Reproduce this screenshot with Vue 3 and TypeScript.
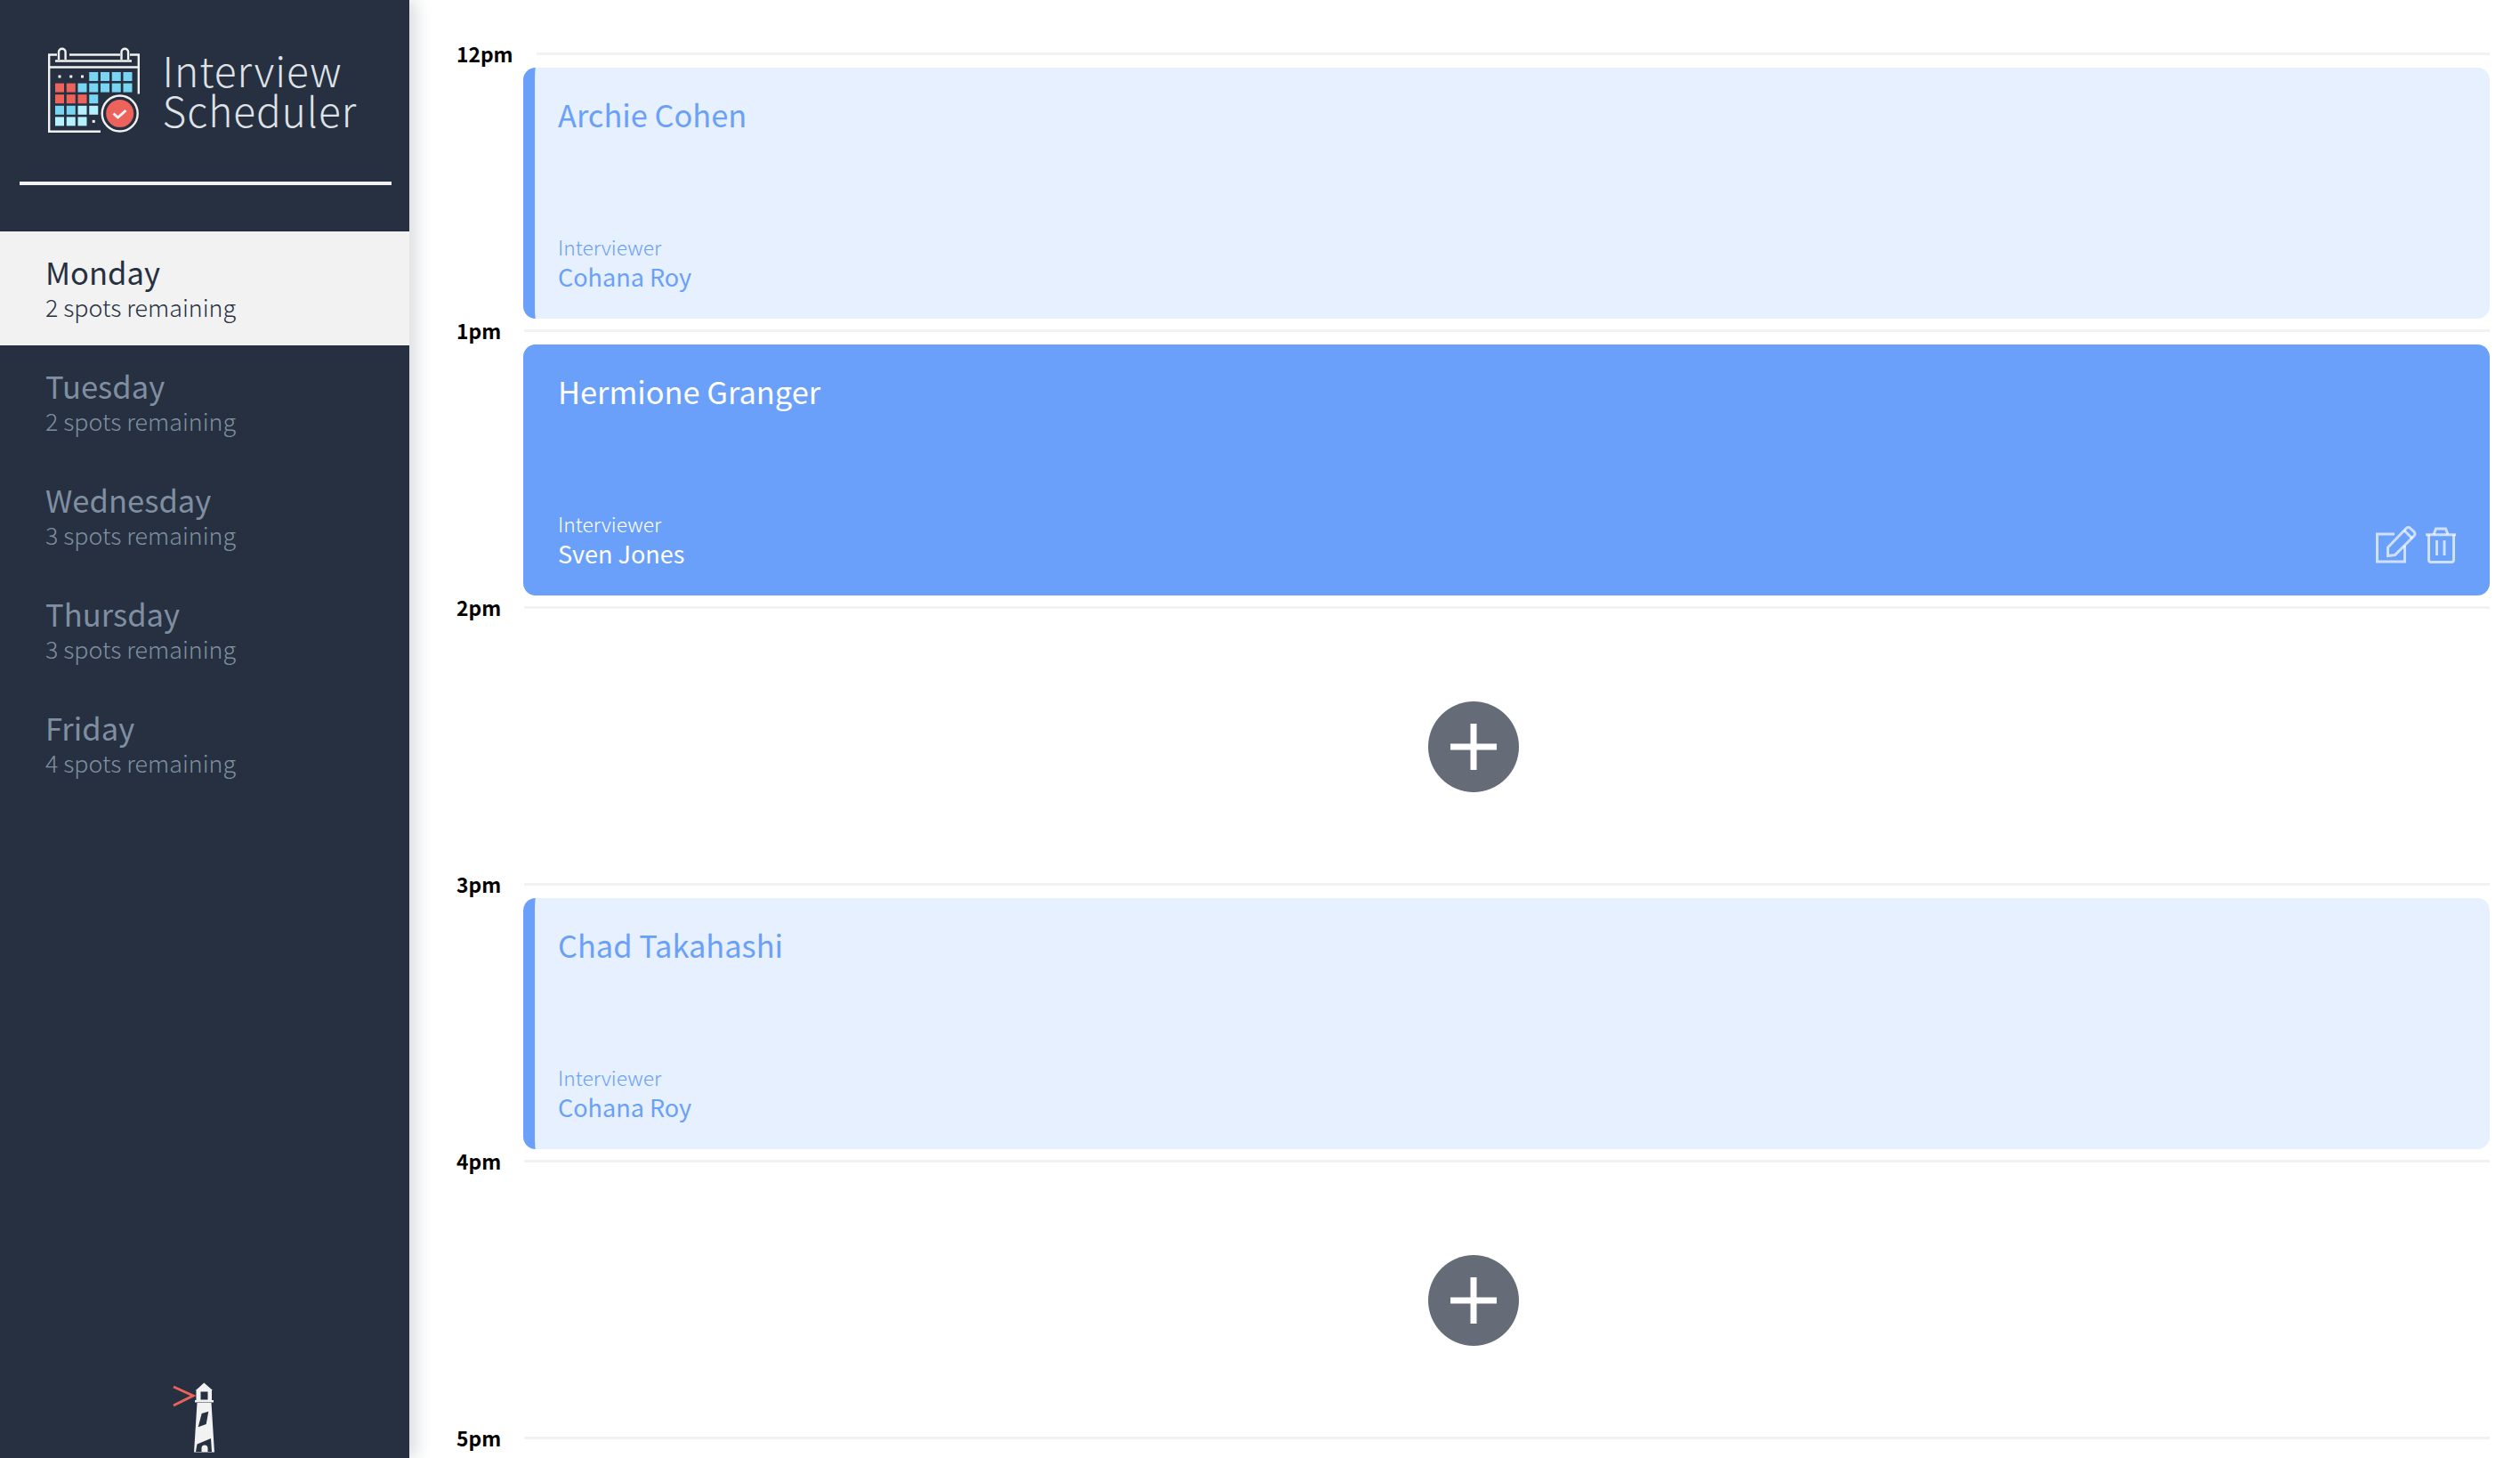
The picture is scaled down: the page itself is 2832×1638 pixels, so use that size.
<script setup lang="ts">
interface Day { name: string; spots: string; selected?: boolean }
interface Slot { time: string; student?: string; interviewer?: string; hover?: boolean }

const days: Day[] = [
  { name: 'Monday', spots: '2 spots remaining', selected: true },
  { name: 'Tuesday', spots: '2 spots remaining' },
  { name: 'Wednesday', spots: '3 spots remaining' },
  { name: 'Thursday', spots: '3 spots remaining' },
  { name: 'Friday', spots: '4 spots remaining' }
]
const slots: Slot[] = [
  { time: '12pm', student: 'Archie Cohen', interviewer: 'Cohana Roy' },
  { time: '1pm', student: 'Hermione Granger', interviewer: 'Sven Jones', hover: true },
  { time: '2pm' },
  { time: '3pm', student: 'Chad Takahashi', interviewer: 'Cohana Roy' },
  { time: '4pm' },
  { time: '5pm' }
]
const B = '#78d6f2', R = '#ee625c', L = '#b5f0fd', D = 'dot', N = ''
const rows = [
  [D, D, D, B, B, B, B],
  [R, R, B, B, B, B, B],
  [R, R, R, B, N, N, N],
  [B, B, L, L, N, N, N],
  [L, L, L, D, N, N, N]
]
const cells = rows.flatMap((r, y) => r.map((c, x) => ({ c, x: 62 + x * 12.75, y: 81 + y * 12.6 }))).filter(c => c.c)
</script>

<template>
  <div class="layout">
    <aside class="sidebar">
      <div class="brand">
        <svg class="logo" viewBox="52 50 108 102" width="108" height="102">
          <g fill="none" stroke="#f2f2f2" stroke-width="2.4">
            <path d="M64 61.5H55.2V147.8H113" />
            <path d="M78 61.5H135" />
            <path d="M146 61.5H155.8V105.5" />
            <path d="M62 68.5H148" />
            <path d="M55 75.5H156" />
            <path d="M66 67V58.5a3.8 3.8 0 0 1 7.6 0V67" />
            <path d="M136.5 67V58.5a3.8 3.8 0 0 1 7.6 0V67" />
            <circle cx="134.7" cy="127.5" r="20" />
          </g>
          <template v-for="(c, i) in cells" :key="i">
            <rect v-if="c.c === 'dot'" :x="c.x + 3.5" :y="c.y + 3.5" width="3" height="3" fill="#f2f2f2" />
            <rect v-else :x="c.x" :y="c.y" width="10" height="10" :fill="c.c" />
          </template>
          <circle cx="134.7" cy="127.5" r="15.5" fill="#ee625c" />
          <path d="M127.5 127.5l5 4.5 9-8" fill="none" stroke="#f2f2f2" stroke-width="3" />
        </svg>
        <div class="title">Interview<br />Scheduler</div>
      </div>
      <hr class="rule" />
      <nav class="days">
        <div v-for="d in days" :key="d.name" class="day" :class="{ selected: d.selected }">
          <div class="day-name">{{ d.name }}</div>
          <div class="day-spots">{{ d.spots }}</div>
        </div>
      </nav>
      <svg class="lighthouse" viewBox="190 1550 56 84" width="56" height="84">
        <path d="M195 1558l22 10-22 11" fill="none" stroke="#ee625c" stroke-width="3" />
        <path d="M229.3 1553.5L239 1562H220z" fill="#f2f2f2" />
        <path d="M220.5 1561.5h17.5v12h-17.5z M225.5 1563.5v9h8v-9z" fill="#f2f2f2" fill-rule="evenodd" />
        <path d="M219 1573h21v2.5h-21z" fill="#f2f2f2" />
        <path d="M221.5 1576H237.5L241 1631.5H218z" fill="#f2f2f2" />
        <path d="M226.7 1588L234.3 1585.7L231.7 1600L222.7 1603.3z" fill="#263040" />
        <path d="M221.5 1622.5L237 1616L238 1631H233.5V1627a3.5 3.5 0 0 0-7 0V1631H220z" fill="#263040" />
      </svg>
    </aside>

    <main class="schedule">
      <article v-for="s in slots" :key="s.time" class="slot">
        <header class="slot-head">
          <h4 class="time">{{ s.time }}</h4>
          <div class="line"></div>
        </header>
        <section v-if="s.student" class="card" :class="{ hover: s.hover }">
          <div class="student">{{ s.student }}</div>
          <div class="card-foot">
            <div>
              <div class="label">Interviewer</div>
              <div class="interviewer">{{ s.interviewer }}</div>
            </div>
            <svg v-if="s.hover" class="actions" viewBox="0 0 94 46" width="94" height="46" fill="none" stroke="#fff" stroke-opacity=".68" stroke-width="3">
              <path d="M23 11H3.5V42H34.5V24" />
              <path d="M15.5 35.5l8-1L45 13a3.2 3.2 0 0 0 0-4.5L40.7 4.5a3.2 3.2 0 0 0-4.5 0L15.5 26z" />
              <path d="M34 7l9 9" />
              <path d="M58 11.7H92" />
              <path d="M61.5 11.7V40a2.5 2.5 0 0 0 2.5 2.5H87a2.5 2.5 0 0 0 2.5-2.5V11.7" />
              <path d="M67 11.5L69.5 5H80.5L83 11.5" />
              <path d="M70.5 18V35" />
              <path d="M79 18V35" />
            </svg>
          </div>
        </section>
        <section v-else class="empty">
          <svg class="add" viewBox="0 0 102 102" width="102" height="102">
            <circle cx="51" cy="51" r="51" fill="#656c77" />
            <path d="M47.5 25h7v22.5H77v7H54.5V77h-7V54.5H25v-7h22.5z" fill="#fff" />
          </svg>
        </section>
      </article>
    </main>
  </div>
</template>

<style>
html, body { margin: 0; background: #fff; overflow: hidden; }
</style>

<style scoped>
.layout {
  display: flex;
  width: 2832px;
  height: 1638px;
  overflow: hidden;
  font-family: "Noto Sans CJK SC", "Noto Sans", sans-serif;
}
.sidebar {
  position: relative;
  display: flex;
  flex-direction: column;
  width: 460px;
  flex: none;
  background: #263040;
  box-shadow: 8px 0 16px rgba(38, 48, 64, 0.16);
}
.brand {
  display: flex;
  align-items: center;
  gap: 26px;
  padding: 50px 0 0 52px;
  height: 102px;
}
.title {
  margin-left: -3.5px;
  font-size: 46px;
  font-weight: 200;
  line-height: 45px;
  color: #dfe2e6;
  letter-spacing: 1px;
}
.rule {
  width: 418px;
  height: 4px;
  margin: 52px 0 0 22px;
  border: 0;
  background: #f2f2f2;
}
.days {
  margin-top: 52px;
}
.day {
  height: 128px;
  box-sizing: border-box;
  padding: 22px 51px 0;
  color: #7f8fa1;
}
.day.selected {
  background: #f2f2f2;
  color: #263040;
}
.day-name {
  font-size: 34.6px;
  line-height: 46px;
}
.day-spots {
  font-size: 26.8px;
  font-weight: 300;
  line-height: 33px;
}
.lighthouse {
  position: absolute;
  left: 190px;
  bottom: 4px;
}
.schedule {
  flex: 1;
  box-sizing: border-box;
  padding: 47.5px 34px 0 53px;
}
.slot {
  height: 311px;
}
.slot-head {
  display: flex;
  align-items: center;
  gap: 26px;
  height: 26px;
}
.time {
  margin: 0;
  font-size: 22.8px;
  font-weight: 700;
  color: #000;
}
.line {
  flex: 1;
  height: 3px;
  background: #f2f2f2;
}
.card {
  display: flex;
  flex-direction: column;
  justify-content: space-between;
  box-sizing: border-box;
  height: 282px;
  margin: 2.9px 0 0 75px;
  padding: 30px 36px 30px 26px;
  border-left: 13px solid #6aa0fa;
  border-radius: 14px;
  background: #e6f0fe;
  color: #6aa0fa;
}
.card.hover {
  background: #6aa0fa;
  color: #fff;
}
.student {
  font-size: 34.4px;
  line-height: 44px;
}
.card-foot {
  display: flex;
  justify-content: space-between;
  align-items: flex-end;
}
.label {
  font-size: 22.8px;
  font-weight: 300;
  line-height: 32px;
}
.interviewer {
  font-size: 27px;
  line-height: 34px;
}
.actions {
  margin-bottom: 4px;
}
.empty {
  display: flex;
  justify-content: center;
  align-items: center;
  height: 282px;
  margin-top: 2.9px;
}
</style>
